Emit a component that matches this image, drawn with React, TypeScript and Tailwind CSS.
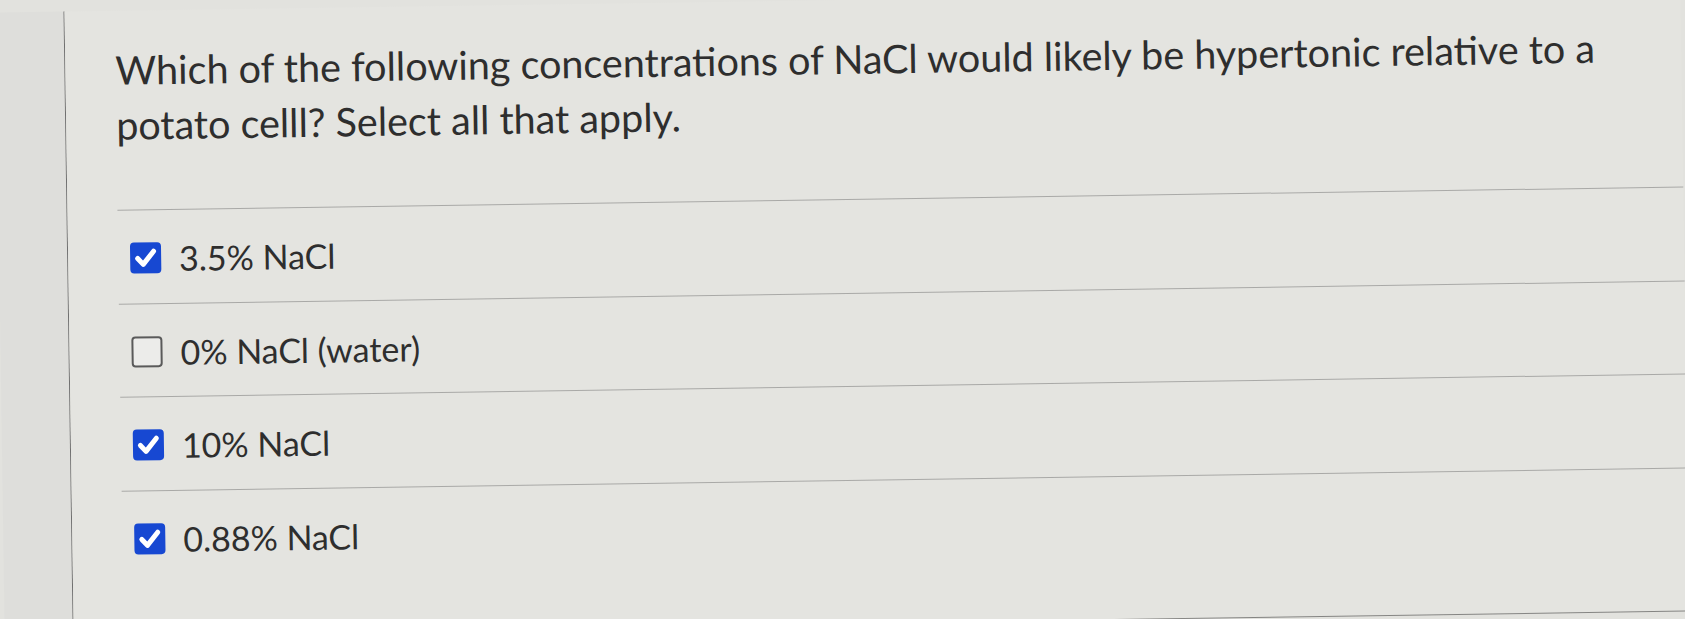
import React from 'react';

interface Answer {
  label: string;
  checked: boolean;
}

const answers: Answer[] = [
  { label: '3.5% NaCl', checked: true },
  { label: '0% NaCl (water)', checked: false },
  { label: '10% NaCl', checked: true },
  { label: '0.88% NaCl', checked: true },
];

const Checkbox: React.FC<{ checked: boolean }> = ({ checked }) =>
  checked ? (
    <span className="flex h-[31px] w-[31px] shrink-0 items-center justify-center rounded-[4px] bg-[#1748d2]">
      <svg width="31" height="31" viewBox="0 0 31 31" fill="none">
        <path
          d="M7.5 16 L13 22 L23.5 9"
          stroke="#ffffff"
          strokeWidth="5"
          strokeLinecap="round"
          strokeLinejoin="round"
        />
      </svg>
    </span>
  ) : (
    <span className="h-[31px] w-[31px] shrink-0 rounded-[4px] border-2 border-[#5a5a5a] bg-[#ececea]" />
  );

export default function App() {
  return (
    <div className="h-[619px] w-full overflow-hidden bg-[#e2e2de]">
      {/* whole sheet sits a little tilted */}
      <div className="-ml-[20px] -mt-[20px] h-[659px] w-[1725px] -rotate-[0.85deg] bg-[#e2e2de] p-[20px]">
        <div className="flex h-[624px] font-['Lato',_'Liberation_Sans',_sans-serif] text-[#2e2e2e]">
          <div className="w-[69px] shrink-0 border-r-[1.5px] border-[#707070] bg-[#dededb]" />
          <div className="flex-1 border-b-[1.5px] border-[#858583] bg-[#e4e4e0] pl-[50px] pt-[31px]">
            <p className="text-[39.5px] leading-[55px]">
              Which of the following concentrations of NaCl would likely be hypertonic relative to a
              <br />
              potato celll? Select all that apply.
            </p>
            <div className="mt-[58px]">
              {answers.map((a) => (
                <div
                  key={a.label}
                  className="flex h-[93.5px] items-center gap-[18px] border-t-[1.5px] border-[#a9a9a7] pl-[12px] pt-[3px]"
                >
                  <Checkbox checked={a.checked} />
                  <span className="text-[34px]">{a.label}</span>
                </div>
              ))}
            </div>
          </div>
        </div>
      </div>
    </div>
  );
}
